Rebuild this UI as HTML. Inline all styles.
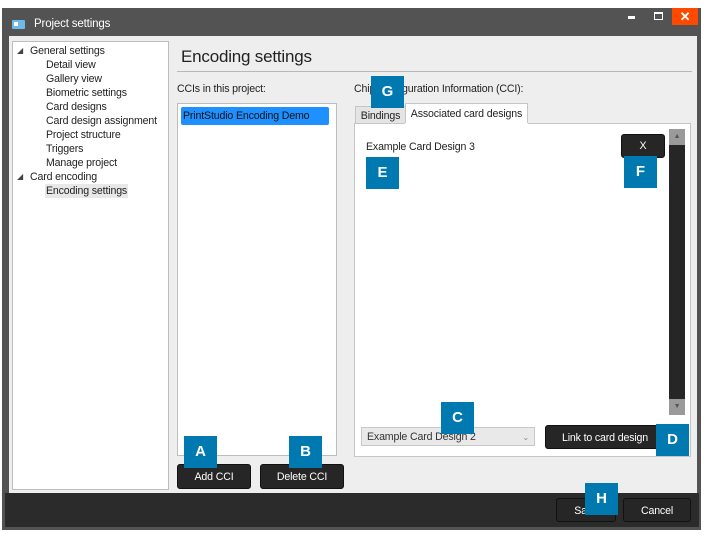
<!DOCTYPE html>
<html><head><meta charset="utf-8"><style>
*{box-sizing:border-box;margin:0;padding:0}
body{width:708px;height:540px;background:#fff;position:relative;overflow:hidden;font-family:"Segoe UI","Liberation Sans",sans-serif;font-size:10.6px;letter-spacing:-0.15px;color:#222}
.a{position:absolute}
.win{left:2px;top:8px;width:699px;height:522px;background:#535353}
.title{left:34px;top:18px;color:#fff;font-size:11.5px}
.content{left:9px;top:36px;width:688px;height:457px;background:#eeeeee}
.footer{left:5px;top:493px;width:694px;height:34px;background:#2b2b2b}
.panel{background:#fff;border:1px solid #bdbdbd}
.tree div{position:absolute;white-space:nowrap;line-height:14px}
.btn{background:#262626;border:1px solid #111;border-radius:3px;color:#fff;text-align:center}
.badge{background:#0079b0;color:#fff;font-weight:bold;font-size:15px;letter-spacing:0;text-align:center;width:33px;height:32px;line-height:32px;font-family:"Liberation Sans",sans-serif}
</style></head><body>
<div class="a win"></div>
<div class="a" style="left:12px;top:20px;width:13px;height:9px;background:#6fb9e8;border-radius:1px"></div>
<div class="a" style="left:14px;top:22px;width:4px;height:4px;background:#fff"></div>
<div class="a title">Project settings</div>
<div class="a" style="left:628px;top:16px;width:7px;height:3px;background:#fff"></div>
<div class="a" style="left:654px;top:12px;width:9px;height:8px;border:1px solid #fff;border-top-width:2px"></div>
<div class="a" style="left:672px;top:8px;width:26px;height:17px;background:#fd4a00;color:#fff;text-align:center;font-weight:bold;font-size:13px;line-height:17px">✕</div>
<div class="a content"></div>
<div class="a footer"></div>

<div class="a panel tree" style="left:12px;top:41px;width:157px;height:449px">
<div style="left:4px;top:2px;font-size:8px;color:#444">◢</div>
<div style="left:17px;top:2px">General settings</div>
<div style="left:33px;top:16px">Detail view</div>
<div style="left:33px;top:30px">Gallery view</div>
<div style="left:33px;top:44px">Biometric settings</div>
<div style="left:33px;top:58px">Card designs</div>
<div style="left:33px;top:72px">Card design assignment</div>
<div style="left:33px;top:86px">Project structure</div>
<div style="left:33px;top:100px">Triggers</div>
<div style="left:33px;top:114px">Manage project</div>
<div style="left:4px;top:128px;font-size:8px;color:#444">◢</div>
<div style="left:17px;top:128px">Card encoding</div>
<div style="left:32px;top:142px;background:#e8e8e8;padding:0 1px">Encoding settings</div>
</div>

<div class="a" style="left:181px;top:47px;font-size:17px;letter-spacing:-0.2px">Encoding settings</div>
<div class="a" style="left:177px;top:71px;width:515px;height:1px;background:#b8b8b8"></div>
<div class="a" style="left:177px;top:83px">CCIs in this project:</div>
<div class="a panel" style="left:177px;top:103px;width:160px;height:353px"></div>
<div class="a" style="left:181px;top:107px;width:148px;height:18px;background:#1e90ff;border-radius:2px;color:#111;padding-left:2px;line-height:18px">PrintStudio Encoding Demo</div>

<div class="a" style="left:354px;top:83px">Chip Configuration Information (CCI):</div>
<div class="a" style="left:355px;top:106px;width:51px;height:18px;background:#e4e4e4;border:1px solid #c6c6c6;text-align:center;line-height:18px">Bindings</div>
<div class="a" style="left:405px;top:103px;width:123px;height:21px;background:#fff;border:1px solid #c6c6c6;border-bottom:none;text-align:center;line-height:21px">Associated card designs</div>
<div class="a" style="left:354px;top:123px;width:337px;height:334px;background:#fff;border:1px solid #c6c6c6;border-top:none"></div>
<div class="a" style="left:354px;top:123px;width:51px;height:1px;background:#c6c6c6"></div>
<div class="a" style="left:528px;top:123px;width:163px;height:1px;background:#c6c6c6"></div>
<div class="a" style="left:366px;top:141px">Example Card Design 3</div>
<div class="a btn" style="left:621px;top:134px;width:44px;height:24px;line-height:23px">X</div>
<div class="a" style="left:669px;top:129px;width:16px;height:286px;background:#262626"></div>
<div class="a" style="left:669px;top:129px;width:16px;height:16px;background:#9a9a9a;color:#555;font-size:7px;text-align:center;line-height:16px">▲</div>
<div class="a" style="left:669px;top:399px;width:16px;height:16px;background:#9a9a9a;color:#555;font-size:7px;text-align:center;line-height:16px">▼</div>
<div class="a" style="left:361px;top:427px;width:174px;height:19px;background:#e9e9e9;border:1px solid #c8c8c8;padding-left:5px;line-height:19px;color:#333">Example Card Design 2<span style="position:absolute;right:5px;font-size:8px;color:#888">⌄</span></div>
<div class="a btn" style="left:545px;top:425px;width:120px;height:24px;line-height:24px">Link to card design</div>

<div class="a btn" style="left:177px;top:464px;width:74px;height:25px;line-height:25px">Add CCI</div>
<div class="a btn" style="left:260px;top:464px;width:84px;height:25px;line-height:25px">Delete CCI</div>
<div class="a btn" style="left:556px;top:498px;width:60px;height:24px;line-height:24px">Save</div>
<div class="a btn" style="left:623px;top:498px;width:68px;height:24px;line-height:24px">Cancel</div>

<div class="a badge" style="left:371px;top:76px">G</div>
<div class="a badge" style="left:366px;top:157px">E</div>
<div class="a badge" style="left:624px;top:156px">F</div>
<div class="a badge" style="left:441px;top:402px">C</div>
<div class="a badge" style="left:656px;top:424px">D</div>
<div class="a badge" style="left:184px;top:436px">A</div>
<div class="a badge" style="left:289px;top:436px">B</div>
<div class="a badge" style="left:585px;top:483px">H</div>
</body></html>
